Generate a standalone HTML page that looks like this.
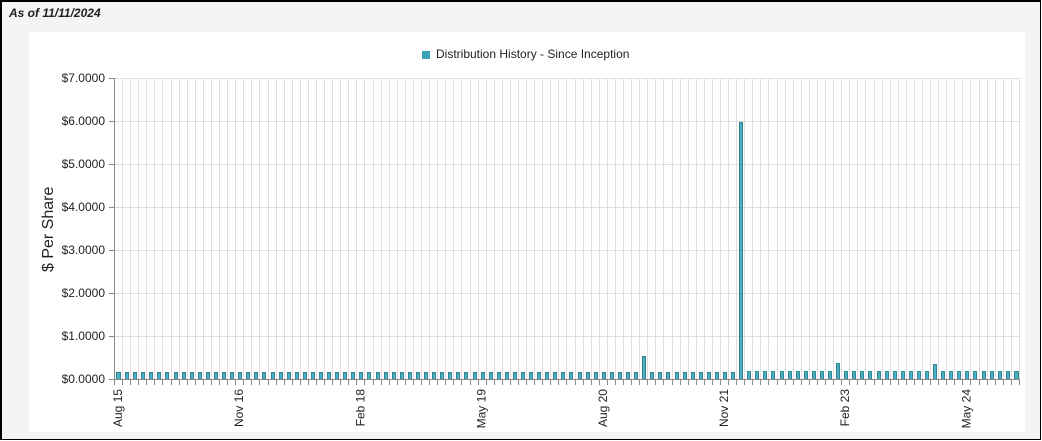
<!DOCTYPE html>
<html>
<head>
<meta charset="utf-8">
<style>
html,body{margin:0;padding:0;width:1042px;height:441px;overflow:hidden;background:#fff}
svg{display:block}
text{font-family:"Liberation Sans",Arial,sans-serif;fill:#222}
</style>
</head>
<body>
<svg width="1042" height="441" viewBox="0 0 1042 441" xmlns="http://www.w3.org/2000/svg">
<rect x="0" y="0" width="1041" height="440" fill="#000"/>
<rect x="2" y="2" width="1038" height="437" fill="#f4f4f4"/>
<rect x="29" y="32" width="996" height="400" fill="#fff"/>
<text x="9" y="17" font-size="12" font-weight="bold" font-style="italic">As of 11/11/2024</text>
<rect x="422" y="51" width="8" height="8" fill="#3aa5b5"/>
<text x="436" y="58" font-size="12">Distribution History - Since Inception</text>
<g fill="none" stroke="#dfdfdf" stroke-width="1">
<path d="M114 78.5H1019.5M114 121.5H1019.5M114 164.5H1019.5M114 207.5H1019.5M114 250.5H1019.5M114 293.5H1019.5M114 336.5H1019.5"/>
<path d="M122.5 78v301
m8-301v301m8-301v301m8-301v301m8-301v301m8-301v301
m9-301v301
m8-301v301m8-301v301m8-301v301m8-301v301m8-301v301m8-301v301m8-301v301m8-301v301m8-301v301m8-301v301m8-301v301
m9-301v301
m8-301v301m8-301v301m8-301v301m8-301v301m8-301v301m8-301v301m8-301v301m8-301v301m8-301v301m8-301v301m8-301v301m8-301v301
m9-301v301
m8-301v301m8-301v301m8-301v301m8-301v301m8-301v301m8-301v301m8-301v301m8-301v301m8-301v301m8-301v301m8-301v301
m9-301v301
m8-301v301m8-301v301m8-301v301m8-301v301m8-301v301m8-301v301m8-301v301m8-301v301m8-301v301m8-301v301m8-301v301m8-301v301
m9-301v301
m8-301v301m8-301v301m8-301v301m8-301v301m8-301v301m8-301v301m8-301v301m8-301v301m8-301v301m8-301v301m8-301v301
m9-301v301
m8-301v301m8-301v301m8-301v301m8-301v301m8-301v301m8-301v301m8-301v301m8-301v301m8-301v301m8-301v301m8-301v301m8-301v301
m9-301v301
m8-301v301m8-301v301m8-301v301m8-301v301m8-301v301m8-301v301m8-301v301m8-301v301m8-301v301m8-301v301m8-301v301
m9-301v301
m8-301v301m8-301v301m8-301v301m8-301v301m8-301v301m8-301v301m8-301v301m8-301v301m8-301v301m8-301v301m8-301v301m8-301v301
m9-301v301
m8-301v301m8-301v301m8-301v301m8-301v301m8-301v301"/>
</g>
<g fill="#4cb0bf" stroke="#2f8291" stroke-width="1">
<path d="M116.5 372.5h4v7h-4z
m9 0h3v7h-3z
m8 0h3v7h-3zm8 0h3v7h-3zm8 0h3v7h-3zm8 0h3v7h-3zm8 0h3v7h-3z
m9 0h3v7h-3z
m8 0h3v7h-3zm8 0h3v7h-3zm8 0h3v7h-3zm8 0h3v7h-3zm8 0h3v7h-3zm8 0h3v7h-3zm8 0h3v7h-3zm8 0h3v7h-3zm8 0h3v7h-3zm8 0h3v7h-3zm8 0h3v7h-3z
m9 0h3v7h-3z
m8 0h3v7h-3zm8 0h3v7h-3zm8 0h3v7h-3zm8 0h3v7h-3zm8 0h3v7h-3zm8 0h3v7h-3zm8 0h3v7h-3zm8 0h3v7h-3zm8 0h3v7h-3zm8 0h3v7h-3zm8 0h3v7h-3zm8 0h3v7h-3z
m9 0h3v7h-3z
m8 0h3v7h-3zm8 0h3v7h-3zm8 0h3v7h-3zm8 0h3v7h-3zm8 0h3v7h-3zm8 0h3v7h-3zm8 0h3v7h-3zm8 0h3v7h-3zm8 0h3v7h-3zm8 0h3v7h-3zm8 0h3v7h-3z
m9 0h3v7h-3z
m8 0h3v7h-3zm8 0h3v7h-3zm8 0h3v7h-3zm8 0h3v7h-3zm8 0h3v7h-3zm8 0h3v7h-3zm8 0h3v7h-3zm8 0h3v7h-3zm8 0h3v7h-3zm8 0h3v7h-3zm8 0h3v7h-3zm8 0h3v7h-3z
m9 0h3v7h-3z
m8 0h3v7h-3zm8 0h3v7h-3zm8 0h3v7h-3zm8 0h3v7h-3zm8 0h3v7h-3zm8 0h3v7h-3zm8 0h3v7h-3z"/>
<path d="M642.5 356.5h3v23h-3z"/>
<path d="M650.5 372.5h3v7h-3zm8 0h3v7h-3zm8 0h3v7h-3zm9 0h3v7h-3zm8 0h3v7h-3zm8 0h3v7h-3zm8 0h3v7h-3zm8 0h3v7h-3zm8 0h3v7h-3zm8 0h3v7h-3zm8 0h3v7h-3z"/>
<path d="M739.5 122.5h3v257h-3z"/>
<path d="M747.5 371.5h3v8h-3zm8 0h3v8h-3zm8 0h3v8h-3zm8 0h3v8h-3zm9 0h3v8h-3zm8 0h3v8h-3zm8 0h3v8h-3zm8 0h3v8h-3zm8 0h3v8h-3zm8 0h3v8h-3zm8 0h3v8h-3z"/>
<path d="M836.5 363.5h3v16h-3z"/>
<path d="M844.5 371.5h3v8h-3zm8 0h3v8h-3zm8 0h3v8h-3zm8 0h3v8h-3zm9 0h3v8h-3zm8 0h3v8h-3zm8 0h3v8h-3zm8 0h3v8h-3zm8 0h3v8h-3zm8 0h3v8h-3zm8 0h3v8h-3z"/>
<path d="M933.5 364.5h3v15h-3z"/>
<path d="M941.5 371.5h3v8h-3zm8 0h3v8h-3zm8 0h3v8h-3zm8 0h3v8h-3zm8 0h3v8h-3zm9 0h3v8h-3zm8 0h3v8h-3zm8 0h3v8h-3zm8 0h3v8h-3zm8 0h4v8h-4z"/>
</g>
<g fill="none" stroke="#888" stroke-width="1">
<path d="M114.5 78V379.5H1019.5"/>
<path d="M109 78.5h5M109 121.5h5M109 164.5h5M109 207.5h5M109 250.5h5M109 293.5h5M109 336.5h5M109 379.5h5"/>
<path d="M114.5 379v6
m8-6v6
m8-6v6m8-6v6m8-6v6m8-6v6m8-6v6
m9-6v6
m8-6v6m8-6v6m8-6v6m8-6v6m8-6v6m8-6v6m8-6v6m8-6v6m8-6v6m8-6v6m8-6v6
m9-6v6
m8-6v6m8-6v6m8-6v6m8-6v6m8-6v6m8-6v6m8-6v6m8-6v6m8-6v6m8-6v6m8-6v6m8-6v6
m9-6v6
m8-6v6m8-6v6m8-6v6m8-6v6m8-6v6m8-6v6m8-6v6m8-6v6m8-6v6m8-6v6m8-6v6
m9-6v6
m8-6v6m8-6v6m8-6v6m8-6v6m8-6v6m8-6v6m8-6v6m8-6v6m8-6v6m8-6v6m8-6v6m8-6v6
m9-6v6
m8-6v6m8-6v6m8-6v6m8-6v6m8-6v6m8-6v6m8-6v6m8-6v6m8-6v6m8-6v6m8-6v6
m9-6v6
m8-6v6m8-6v6m8-6v6m8-6v6m8-6v6m8-6v6m8-6v6m8-6v6m8-6v6m8-6v6m8-6v6m8-6v6
m9-6v6
m8-6v6m8-6v6m8-6v6m8-6v6m8-6v6m8-6v6m8-6v6m8-6v6m8-6v6m8-6v6m8-6v6
m9-6v6
m8-6v6m8-6v6m8-6v6m8-6v6m8-6v6m8-6v6m8-6v6m8-6v6m8-6v6m8-6v6m8-6v6m8-6v6
m9-6v6
m8-6v6m8-6v6m8-6v6m8-6v6m8-6v6"/>
</g>
<g font-size="12" text-anchor="end">
<text x="105" y="82">$7.0000</text>
<text x="105" y="125">$6.0000</text>
<text x="105" y="168">$5.0000</text>
<text x="105" y="211">$4.0000</text>
<text x="105" y="254">$3.0000</text>
<text x="105" y="297">$2.0000</text>
<text x="105" y="340">$1.0000</text>
<text x="105" y="383">$0.0000</text>
</g>
<text transform="translate(53 272) rotate(-90)" font-size="16">$ Per Share</text>
<g font-size="12" text-anchor="end">
<text transform="translate(122 389) rotate(-90)">Aug 15</text>
<text transform="translate(243.2 389) rotate(-90)">Nov 16</text>
<text transform="translate(364.4 389) rotate(-90)">Feb 18</text>
<text transform="translate(485.6 389) rotate(-90)">May 19</text>
<text transform="translate(606.8 389) rotate(-90)">Aug 20</text>
<text transform="translate(728 389) rotate(-90)">Nov 21</text>
<text transform="translate(849.2 389) rotate(-90)">Feb 23</text>
<text transform="translate(970.4 389) rotate(-90)">May 24</text>
</g>
</svg>
</body>
</html>
